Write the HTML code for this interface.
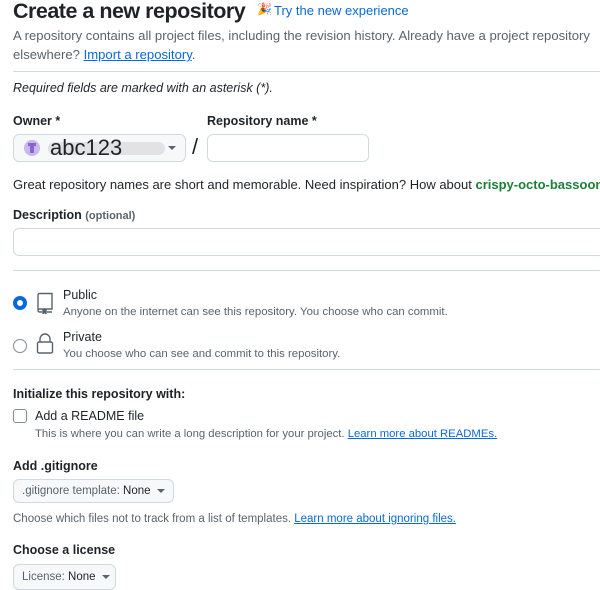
<!DOCTYPE html>
<html><head><meta charset="utf-8"><style>
*{margin:0;padding:0;box-sizing:border-box}
body{width:600px;height:583px;overflow:hidden;background:#fff;font-family:"Liberation Sans",Arial,sans-serif;color:#1f2328;position:relative}
.a{position:absolute;white-space:nowrap}
.m{color:#59636e}
a{color:#0969da}
.hr{position:absolute;left:13px;right:0;height:1px;background:#d1d9e0}
.b{font-weight:bold}
.box{position:absolute;border:1px solid #d1d9e0;border-radius:6px;background:#fff}
.btn{position:absolute;border:1px solid #d1d9e0;border-radius:6px;background:#f6f8fa;font-size:11.5px;padding-left:8px;line-height:22px;color:#1f2328}
.car{display:inline-block;width:0;height:0;border-left:4px solid transparent;border-right:4px solid transparent;border-top:4px solid #59636e;vertical-align:middle;margin-left:6px}
</style></head><body>
<div class="a b" style="left:13px;top:-1px;font-size:21.5px;letter-spacing:-0.5px">Create a new repository</div>
<div class="a" style="left:257px;top:2px;font-size:12px">🎉</div>
<div class="a" style="left:274px;top:3px;font-size:13px;color:#0969da">Try the new experience</div>
<div class="a m" style="left:13px;top:28px;font-size:13.1px">A repository contains all project files, including the revision history. Already have a project repository</div>
<div class="a m" style="left:13px;top:47px;font-size:13.1px">elsewhere? <a style="text-decoration:underline">Import a repository</a>.</div>
<div class="hr" style="top:71px"></div>
<div class="a" style="left:13px;top:81px;font-size:12.5px;font-style:italic">Required fields are marked with an asterisk (*).</div>
<div class="a b" style="left:13px;top:114px;font-size:12.5px">Owner *</div>
<div class="a b" style="left:207px;top:114px;font-size:12.5px">Repository name *</div>
<div class="box" style="left:13px;top:134px;width:173px;height:28px;background:#f6f8fa"></div>
<div class="a" style="left:24px;top:140px;width:16px;height:16px;border-radius:50%;background:#c9b8e8"></div>
<div class="a" style="left:28px;top:143px;width:8px;height:3px;background:#8a63d2"></div>
<div class="a" style="left:30px;top:145px;width:4px;height:8px;background:#8a63d2"></div>
<div class="a" style="left:48px;top:142px;width:117px;height:13px;border-radius:7px;background:#e2e2e4"></div>
<div class="a" style="left:50px;top:135px;font-size:22px">abc123</div>
<div class="a" style="left:168px;top:146px;width:0;height:0;border-left:4px solid transparent;border-right:4px solid transparent;border-top:4px solid #59636e"></div>
<div class="a" style="left:192px;top:134px;font-size:22px">/</div>
<div class="box" style="left:207px;top:134px;width:162px;height:28px"></div>
<div class="a" style="left:13px;top:177px;font-size:13px">Great repository names are short and memorable. Need inspiration? How about <span class="b" style="color:#1a7f37">crispy-octo-bassoon</span></div>
<div class="a b" style="left:13px;top:208px;font-size:12.5px">Description <span class="m" style="font-size:11px">(optional)</span></div>
<div class="box" style="left:13px;top:228px;width:600px;height:28px"></div>
<div class="hr" style="top:270px"></div>
<div class="a" style="left:13px;top:296px;width:14px;height:14px;border-radius:50%;border:4px solid #0969da"></div>
<svg class="a" style="left:36px;top:292px" width="18" height="22" viewBox="0 0 18 22" fill="none" stroke="#59636e" stroke-width="1.4"><path d="M2 18V3a1.5 1.5 0 0 1 1.5-1.5H16V17H3.5A1.5 1.5 0 0 0 2 18.5 1.5 1.5 0 0 0 3.5 20H6M11 20h5"/><path d="M7 17v4.5l1.5-1 1.5 1V17" fill="#59636e"/></svg>
<div class="a" style="left:63px;top:288px;font-size:12.5px">Public</div>
<div class="a m" style="left:63px;top:306px;font-size:11.4px">Anyone on the internet can see this repository. You choose who can commit.</div>
<div class="a" style="left:13px;top:339px;width:14px;height:14px;border-radius:50%;border:1px solid #818b98"></div>
<svg class="a" style="left:36px;top:333px" width="18" height="22" viewBox="0 0 18 22" fill="none" stroke="#59636e" stroke-width="1.4"><path d="M4 9V6a5 5 0 0 1 10 0v3"/><rect x="1.5" y="9" width="15" height="11" rx="1.5"/></svg>
<div class="a" style="left:63px;top:330px;font-size:12.5px">Private</div>
<div class="a m" style="left:63px;top:348px;font-size:11.4px">You choose who can see and commit to this repository.</div>
<div class="hr" style="top:369px"></div>
<div class="a b" style="left:13px;top:387px;font-size:12.5px">Initialize this repository with:</div>
<div class="a" style="left:13px;top:409px;width:14px;height:14px;border-radius:3px;border:1px solid #818b98"></div>
<div class="a" style="left:35px;top:409px;font-size:12.5px">Add a README file</div>
<div class="a m" style="left:35px;top:428px;font-size:11.3px">This is where you can write a long description for your project. <a style="text-decoration:underline">Learn more about READMEs.</a></div>
<div class="a b" style="left:13px;top:459px;font-size:12.5px">Add .gitignore</div>
<div class="btn" style="left:13px;top:479px;width:161px;height:24px"><span class="m">.gitignore template:</span> None<span class="car"></span></div>
<div class="a m" style="left:13px;top:513px;font-size:11.5px">Choose which files not to track from a list of templates. <a style="text-decoration:underline">Learn more about ignoring files.</a></div>
<div class="a b" style="left:13px;top:543px;font-size:12.5px">Choose a license</div>
<div class="btn" style="left:13px;top:564px;width:103px;height:26px;padding-top:1px"><span class="m">License:</span> None<span class="car"></span></div>
</body></html>
